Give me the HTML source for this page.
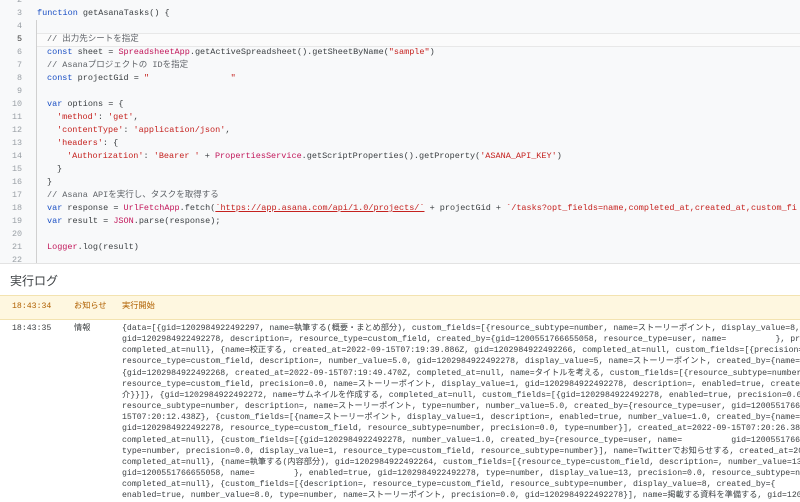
<!DOCTYPE html>
<html><head><meta charset="utf-8"><style>
body{margin:0;width:800px;height:502px;overflow:hidden;background:#fff;font-family:"Liberation Sans","Noto Sans CJK JP",sans-serif;position:relative}
#wrap{position:absolute;left:0;top:0;width:800px;height:502px;overflow:hidden}
#code{position:absolute;left:0;top:0;width:800px;height:263px;background:#f8f9fa;border-bottom:1px solid #e3e3e3;overflow:hidden}
.ln{position:absolute;left:0;width:22px;text-align:right;color:#9aa0a6;font:8.4px/13px "Liberation Mono",monospace;height:13px}
.cl{position:absolute;left:37px;white-space:pre;color:#3c4043;font:8.5px/13px "Liberation Mono","Noto Sans CJK JP",monospace;height:13px}
.k{color:#1a4fc4}.s{color:#c5221f}.c{color:#5f6368}.p{color:#c2185b}
#hl{position:absolute;left:36px;top:33px;width:764px;height:12px;background:#fbfbfb;border-top:1px solid #e8e8e8;border-bottom:1px solid #e8e8e8}
#guide{position:absolute;left:36px;top:20px;width:1px;height:245px;background:#d0d0d0}
.row{position:absolute;white-space:pre;font:8.2px/11.15px "Liberation Mono","Noto Sans CJK JP",monospace;color:#3c4043}
</style></head><body><div id="wrap">
<div id="code">
<div id="hl"></div><div id="guide"></div>
<div class="ln" style="top:-6px">2</div>
<div class="ln" style="top:7px">3</div><div class="cl" style="top:7px;left:37px"><span class="k">function</span> getAsanaTasks() {</div>
<div class="ln" style="top:20px">4</div>
<div class="ln" style="top:33px;color:#333">5</div><div class="cl" style="top:33px;left:47px"><span class="c">// 出力先シートを指定</span></div>
<div class="ln" style="top:46px">6</div><div class="cl" style="top:46px;left:47px"><span class="k">const</span> sheet = <span class="p">SpreadsheetApp</span>.getActiveSpreadsheet().getSheetByName(<span class="s">"sample"</span>)</div>
<div class="ln" style="top:59px">7</div><div class="cl" style="top:59px;left:47px"><span class="c">// Asanaプロジェクトの IDを指定</span></div>
<div class="ln" style="top:72px">8</div><div class="cl" style="top:72px;left:47px"><span class="k">const</span> projectGid = <span class="s">"                "</span></div>
<div class="ln" style="top:85px">9</div>
<div class="ln" style="top:98px">10</div><div class="cl" style="top:98px;left:47px"><span class="k">var</span> options = {</div>
<div class="ln" style="top:111px">11</div><div class="cl" style="top:111px;left:57px"><span class="s">'method'</span>: <span class="s">'get'</span>,</div>
<div class="ln" style="top:124px">12</div><div class="cl" style="top:124px;left:57px"><span class="s">'contentType'</span>: <span class="s">'application/json'</span>,</div>
<div class="ln" style="top:137px">13</div><div class="cl" style="top:137px;left:57px"><span class="s">'headers'</span>: {</div>
<div class="ln" style="top:150px">14</div><div class="cl" style="top:150px;left:67px"><span class="s">'Authorization'</span>: <span class="s">'Bearer '</span> + <span class="p">PropertiesService</span>.getScriptProperties().getProperty(<span class="s">'ASANA_API_KEY'</span>)</div>
<div class="ln" style="top:163px">15</div><div class="cl" style="top:163px;left:57px">}</div>
<div class="ln" style="top:176px">16</div><div class="cl" style="top:176px;left:47px">}</div>
<div class="ln" style="top:189px">17</div><div class="cl" style="top:189px;left:47px"><span class="c">// Asana APIを実行し、タスクを取得する</span></div>
<div class="ln" style="top:202px">18</div><div class="cl" style="top:202px;left:47px"><span class="k">var</span> response = <span class="p">UrlFetchApp</span>.fetch(<span class="s" style="text-decoration:underline">`https://app.asana.com/api/1.0/projects/`</span> + projectGid + <span class="s">`/tasks?opt_fields=name,completed_at,created_at,custom_fi</span></div>
<div class="ln" style="top:215px">19</div><div class="cl" style="top:215px;left:47px"><span class="k">var</span> result = <span class="p">JSON</span>.parse(response);</div>
<div class="ln" style="top:228px">20</div>
<div class="ln" style="top:241px">21</div><div class="cl" style="top:241px;left:47px"><span class="p">Logger</span>.log(result)</div>
<div class="ln" style="top:254px">22</div>
</div>
<div style="position:absolute;left:10px;top:272px;font-size:12px;color:#3c4043">実行ログ</div>
<div style="position:absolute;left:0;top:295px;width:800px;height:23px;background:#fef7e0;border-top:1px solid #f3e3b0;border-bottom:1px solid #f3e3b0"></div>
<div class="row" style="top:301px;left:12px;color:#b06000">18:43:34</div>
<div class="row" style="top:301px;left:74px;color:#b06000">お知らせ</div>
<div class="row" style="top:301px;left:122px;color:#b06000">実行開始</div>
<div class="row" style="top:323px;left:12px">18:43:35</div>
<div class="row" style="top:323px;left:74px">情報</div>
<div class="row" style="top:323px;left:122px;width:678px;overflow:hidden">{data=[{gid=1202984922492297, name=執筆する(概要・まとめ部分), custom_fields=[{resource_subtype=number, name=ストーリーポイント, display_value=8, enabled=true
gid=1202984922492278, description=, resource_type=custom_field, created_by={gid=1200551766655058, resource_type=user, name=          }, precision=0
completed_at=null}, {name=校正する, created_at=2022-09-15T07:19:39.886Z, gid=1202984922492266, completed_at=null, custom_fields=[{precision=0.0, t
resource_type=custom_field, description=, number_value=5.0, gid=1202984922492278, display_value=5, name=ストーリーポイント, created_by={name=
{gid=1202984922492268, created_at=2022-09-15T07:19:49.470Z, completed_at=null, name=タイトルを考える, custom_fields=[{resource_subtype=number, type=n
resource_type=custom_field, precision=0.0, name=ストーリーポイント, display_value=1, gid=1202984922492278, description=, enabled=true, created_by={res
介}}]}, {gid=1202984922492272, name=サムネイルを作成する, completed_at=null, custom_fields=[{gid=1202984922492278, enabled=true, precision=0.0, resou
resource_subtype=number, description=, name=ストーリーポイント, type=number, number_value=5.0, created_by={resource_type=user, gid=1200551766655058, n
15T07:20:12.438Z}, {custom_fields=[{name=ストーリーポイント, display_value=1, description=, enabled=true, number_value=1.0, created_by={name=
gid=1202984922492278, resource_type=custom_field, resource_subtype=number, precision=0.0, type=number}], created_at=2022-09-15T07:20:26.382Z, na
completed_at=null}, {custom_fields=[{gid=1202984922492278, number_value=1.0, created_by={resource_type=user, name=          gid=1200551766655058}
type=number, precision=0.0, display_value=1, resource_type=custom_field, resource_subtype=number}], name=Twitterでお知らせする, created_at=2022-09-1
completed_at=null}, {name=執筆する(内容部分), gid=1202984922492264, custom_fields=[{resource_type=custom_field, description=, number_value=13.0, nam
gid=1200551766655058, name=        }, enabled=true, gid=1202984922492278, type=number, display_value=13, precision=0.0, resource_subtype=number}]
completed_at=null}, {custom_fields=[{description=, resource_type=custom_field, resource_subtype=number, display_value=8, created_by={
enabled=true, number_value=8.0, type=number, name=ストーリーポイント, precision=0.0, gid=1202984922492278}], name=掲載する資料を準備する, gid=1202984922492</div>
</div></body></html>
